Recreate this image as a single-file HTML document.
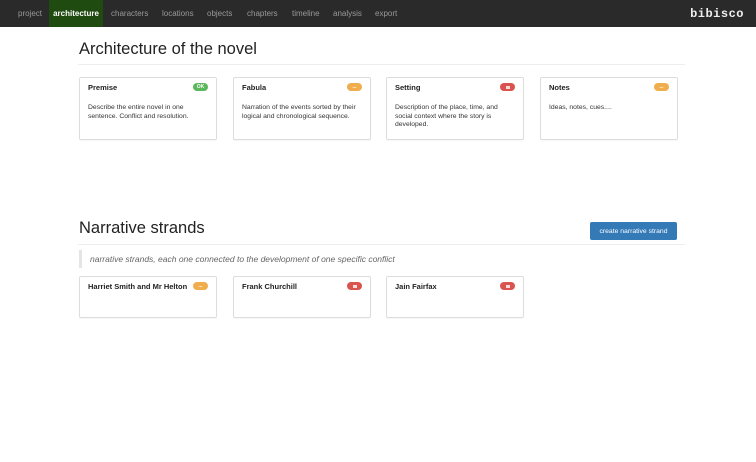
<!DOCTYPE html>
<html><head><style>
*{margin:0;padding:0;box-sizing:border-box}
body{width:756px;height:462px;background:#fff;font-family:"Liberation Sans",sans-serif;color:#333;position:relative;overflow:hidden}
.nav{position:absolute;left:0;top:0;width:756px;height:27px;background:#2a2a2a}
.nav span{position:absolute;top:9px;font-size:8px;color:#999}
.nav .act{background:#1f4a10;color:#fff;top:0;height:27px;line-height:27px;width:54px;text-align:center;font-weight:bold}
.logo{position:absolute;right:12px;top:7px;font-family:"Liberation Mono",monospace;font-weight:bold;color:#eee;font-size:12px;letter-spacing:0.5px}
h1{position:absolute;left:79px;font-weight:normal;font-size:16.5px;color:#222}
.hr{position:absolute;left:78px;width:607px;height:1px;background:#eee}
.card{position:absolute;width:138px;border:1px solid #ddd;border-radius:2px;background:#fff;box-shadow:0 1px 1px rgba(0,0,0,.04)}
.card b{position:absolute;left:8px;top:5px;font-size:7.5px;color:#222}
.card p{position:absolute;left:8px;top:26px;width:114px;font-size:6.8px;line-height:8.5px;color:#333}
.bd{position:absolute;right:8px;top:5px;width:15px;height:8px;border-radius:4px;color:#fff;font-size:5px;font-weight:bold;display:flex;align-items:center;justify-content:center}
.ok{background:#5cb85c}.w{background:#f0ad4e}.r{background:#d9534f}
.sq{width:4px;height:3px;background:#fff;opacity:.8}
.btn{position:absolute;left:590px;top:222px;width:87px;height:18px;background:#337ab7;border-radius:2px;color:#fff;font-size:6.8px;display:flex;align-items:center;justify-content:center}
.bq{position:absolute;left:79px;top:250px;height:18px;border-left:3px solid #e5e5e5;padding-left:8px;font-size:8.5px;font-style:italic;color:#666;line-height:18px}
</style></head><body>
<div class="nav">
<span style="left:18px">project</span>
<span class="act" style="left:49px">architecture</span>
<span style="left:111px">characters</span>
<span style="left:162px">locations</span>
<span style="left:207px">objects</span>
<span style="left:247px">chapters</span>
<span style="left:292px">timeline</span>
<span style="left:333px">analysis</span>
<span style="left:375px">export</span>
<div class="logo">bibisco</div>
</div>
<h1 style="top:40px">Architecture of the novel</h1>
<div class="hr" style="top:64px"></div>
<div class="card" style="left:79px;top:77px;height:63px"><b>Premise</b><div class="bd ok">OK</div><p>Describe the entire novel in one sentence. Conflict and resolution.</p></div>
<div class="card" style="left:233px;top:77px;height:63px"><b>Fabula</b><div class="bd w">...</div><p style="width:120px">Narration of the events sorted by their logical and chronological sequence.</p></div>
<div class="card" style="left:386px;top:77px;height:63px"><b>Setting</b><div class="bd r"><div class="sq"></div></div><p>Description of the place, time, and social context where the story is developed.</p></div>
<div class="card" style="left:540px;top:77px;height:63px"><b>Notes</b><div class="bd w">...</div><p>Ideas, notes, cues....</p></div>
<h1 style="top:219px">Narrative strands</h1>
<div class="btn">create narrative strand</div>
<div class="hr" style="top:244px"></div>
<div class="bq">narrative strands, each one connected to the development of one specific conflict</div>
<div class="card" style="left:79px;top:276px;height:42px"><b>Harriet Smith and Mr Helton</b><div class="bd w">...</div></div>
<div class="card" style="left:233px;top:276px;height:42px"><b>Frank Churchill</b><div class="bd r"><div class="sq"></div></div></div>
<div class="card" style="left:386px;top:276px;height:42px"><b>Jain Fairfax</b><div class="bd r"><div class="sq"></div></div></div>
</body></html>
